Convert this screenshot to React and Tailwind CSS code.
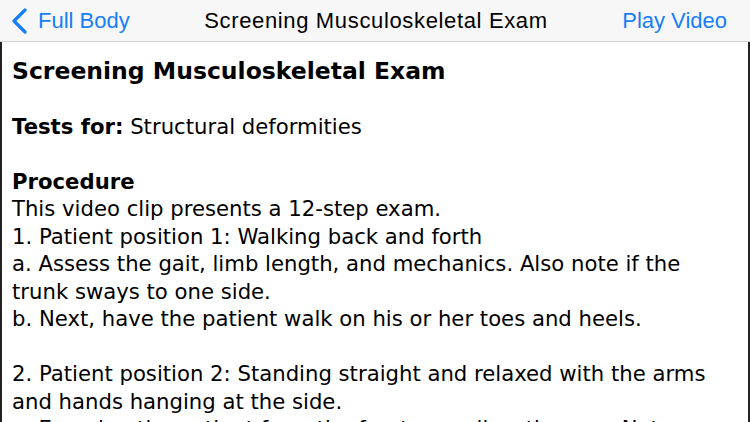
export default function App() {
  const body = { fontFamily: '"DejaVu Sans", Verdana, sans-serif' }
  const nav = { fontFamily: '"Liberation Sans", Arial, sans-serif' }

  return (
    <div className="w-[750px] h-[422px] overflow-hidden bg-white flex flex-col">
      <div
        className="h-[42px] shrink-0 flex items-center justify-between bg-[#f7f7f7] border-b border-[#d4d4d4] px-[10px]"
        style={nav}
      >
        <div className="flex items-center gap-[8px] text-[#177ef7] text-[22px]">
          <svg width="20" height="26" viewBox="0 0 20 26" fill="none">
            <path d="M15 2L4 13l11 11" stroke="#177ef7" strokeWidth="3.2" strokeLinecap="round" strokeLinejoin="round" />
          </svg>
          <span>Full Body</span>
        </div>
        <div className="text-[22px] tracking-[0.65px] text-black">Screening Musculoskeletal Exam</div>
        <div className="text-[22px] text-[#177ef7] pr-[13px]">Play Video</div>
      </div>

      <div className="flex-1 border-x-2 border-[#222] pl-[10px] pr-[18px] pt-[15px] text-black text-[21.2px] leading-[27.5px]" style={body}>
        <h1 className="font-bold text-[23.5px] leading-[28px]">Screening Musculoskeletal Exam</h1>
        <p>&nbsp;</p>
        <p><span className="font-bold">Tests for:</span> Structural deformities</p>
        <p>&nbsp;</p>
        <p className="font-bold">Procedure</p>
        <p>This video clip presents a 12-step exam.</p>
        <p>1. Patient position 1: Walking back and forth</p>
        <p>a. Assess the gait, limb length, and mechanics. Also note if the trunk sways to one side.</p>
        <p>b. Next, have the patient walk on his or her toes and heels.</p>
        <p>&nbsp;</p>
        <p>2. Patient position 2: Standing straight and relaxed with the arms and hands hanging at the side.</p>
        <p>a. Examine the patient from the front as well as the rear. Note any asymmetry.</p>
      </div>
    </div>
  )
}
